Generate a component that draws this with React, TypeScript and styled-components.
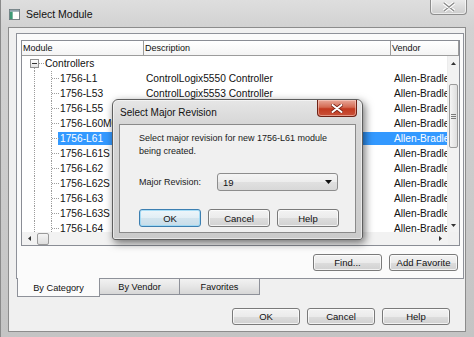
import styled, { createGlobalStyle } from 'styled-components';

const UI_FONT = `"Liberation Sans", Arial, sans-serif`;

const GlobalStyle = createGlobalStyle`
  html, body {
    margin: 0;
    padding: 0;
    background: #c6c6c6;
  }
  body {
    width: 474px;
    height: 337px;
    overflow: hidden;
    font-family: ${UI_FONT};
    color: #000;
  }
`;

interface ModuleRow {
  name: string;
  desc: string;
  selected?: boolean;
}

const modules: ModuleRow[] = [
  { name: '1756-L1', desc: 'ControlLogix5550 Controller' },
  { name: '1756-L53', desc: 'ControlLogix5553 Controller' },
  { name: '1756-L55', desc: 'ControlLogix5555 Controller' },
  { name: '1756-L60M03SE', desc: 'ControlLogix5560M03SE Controller' },
  { name: '1756-L61', desc: 'ControlLogix5561 Controller', selected: true },
  { name: '1756-L61S', desc: 'ControlLogix5561S Safety Controller' },
  { name: '1756-L62', desc: 'ControlLogix5562 Controller' },
  { name: '1756-L62S', desc: 'ControlLogix5562S Safety Controller' },
  { name: '1756-L63', desc: 'ControlLogix5563 Controller' },
  { name: '1756-L63S', desc: 'ControlLogix5563S Safety Controller' },
  { name: '1756-L64', desc: 'ControlLogix5564 Controller' },
];

const dotV = 'repeating-linear-gradient(to bottom, #9c9c9c 0 1px, transparent 1px 2px)';

const App = () => {
  return (
    <>
      <GlobalStyle />
      <Frame>
        <TitleBar>
          <AppIcon viewBox="0 0 12 12">
            <rect x="0.5" y="0.5" width="11" height="11" fill="#fff" stroke="#6d7b80" />
            <rect x="1" y="1" width="10" height="2" fill="#8fa3ad" />
            <rect x="1" y="3" width="3" height="8" fill="#3f9a78" />
          </AppIcon>
          <Title>Select Module</Title>
          <CloseButton>
            <svg width="12" height="10" viewBox="0 0 12 10">
              <path d="M1 1 L11 9 M11 1 L1 9" stroke="#fff" strokeWidth="3.4" strokeLinecap="round" />
              <path d="M1 1 L11 9 M11 1 L1 9" stroke="#8a8a8a" strokeWidth="1.4" strokeLinecap="round" />
            </svg>
          </CloseButton>
        </TitleBar>

        <Client>
          <TabPage>
            <ListView>
              <Header>
                <HeaderCell $width={122}>Module</HeaderCell>
                <HeaderCell $width={247}>Description</HeaderCell>
                <HeaderCell>Vendor</HeaderCell>
              </Header>
              <Middle>
                <Body>
                  <Row>
                    <RootCell>
                      <Expander>
                        <svg width="5" height="1" viewBox="0 0 5 1">
                          <rect width="5" height="1" fill="#333" />
                        </svg>
                      </Expander>
                      <Connector $width={5} />
                      <Label>Controllers</Label>
                    </RootCell>
                    <Cell />
                    <Cell />
                  </Row>
                  {modules.map((m) => (
                    <Row key={m.name} $selected={m.selected}>
                      <ChildCell>
                        <Connector $width={7} />
                        <Label>{m.name}</Label>
                      </ChildCell>
                      <Cell>{m.desc}</Cell>
                      <Cell>Allen-Bradley</Cell>
                    </Row>
                  ))}
                </Body>
                <VScroll>
                  <ArrowBox>
                    <svg width="5" height="3" viewBox="0 0 5 3">
                      <path d="M0 3 L2.5 0 L5 3 Z" fill="#333" />
                    </svg>
                  </ArrowBox>
                  <VTrack>
                    <VThumb>
                      <Grip />
                    </VThumb>
                  </VTrack>
                  <ArrowBox>
                    <svg width="5" height="3" viewBox="0 0 5 3">
                      <path d="M0 0 L5 0 L2.5 3 Z" fill="#333" />
                    </svg>
                  </ArrowBox>
                </VScroll>
              </Middle>
              <HScrollRow>
                <HScroll>
                  <HArrowBox>
                    <svg width="3" height="5" viewBox="0 0 3 5">
                      <path d="M3 0 L3 5 L0 2.5 Z" fill="#333" />
                    </svg>
                  </HArrowBox>
                  <HThumb />
                  <HTrack />
                  <HArrowBox>
                    <svg width="3" height="5" viewBox="0 0 3 5">
                      <path d="M0 0 L0 5 L3 2.5 Z" fill="#333" />
                    </svg>
                  </HArrowBox>
                </HScroll>
                <Corner />
              </HScrollRow>
            </ListView>
            <PageButtons>
              <Button $width={69}>Find...</Button>
              <Button $width={69}>Add Favorite</Button>
            </PageButtons>
          </TabPage>

          <TabStrip>
            <Tab $active $width={83}>By Category</Tab>
            <Tab $width={81}>By Vendor</Tab>
            <Tab $width={81}>Favorites</Tab>
          </TabStrip>

          <Footer>
            <Button $width={68} $height={17}>OK</Button>
            <Button $width={68} $height={17}>Cancel</Button>
            <Button $width={68} $height={17}>Help</Button>
          </Footer>
        </Client>

        <Dialog>
          <DialogTitleBar>
            <DialogTitle>Select Major Revision</DialogTitle>
            <RedClose>
              <svg width="12" height="9" viewBox="0 0 12 9">
                <path d="M1.5 1 L10.5 8 M10.5 1 L1.5 8" stroke="#7a2316" strokeWidth="3.6" strokeLinecap="round" />
                <path d="M1.5 1 L10.5 8 M10.5 1 L1.5 8" stroke="#fff" strokeWidth="2" strokeLinecap="round" />
              </svg>
            </RedClose>
          </DialogTitleBar>
          <DialogClient>
            <Prompt>
              Select major revision for new 1756-L61 module
              <br />
              being created.
            </Prompt>
            <FieldRow>
              <FieldLabel>Major Revision:</FieldLabel>
              <Combo>
                <span>19</span>
                <svg width="7" height="4" viewBox="0 0 7 4">
                  <path d="M0 0 L7 0 L3.5 4 Z" fill="#111" />
                </svg>
              </Combo>
            </FieldRow>
            <DialogButtons>
              <Button $width={62} $height={18} $default>OK</Button>
              <Button $width={62} $height={18}>Cancel</Button>
              <Button $width={62} $height={18}>Help</Button>
            </DialogButtons>
          </DialogClient>
        </Dialog>
      </Frame>
    </>
  );
};

export default App;

const Frame = styled.div`
  position: relative;
  width: 474px;
  height: 337px;
  display: flex;
  flex-direction: column;
  box-sizing: border-box;
  padding: 0 8px 5px 7px;
  background: linear-gradient(180deg, #dedede 0px, #d2d2d2 27px, #c4c4c4 100%);
  border-left: 1px solid #8a8a8a;
  overflow: hidden;
`;

const TitleBar = styled.div`
  height: 27px;
  flex: none;
  display: flex;
  align-items: center;
  position: relative;
  padding-left: 1px;
`;

const AppIcon = styled.svg`
  width: 11px;
  height: 11px;
  margin-top: 2px;
`;

const Title = styled.span`
  margin-left: 6px;
  margin-top: 1px;
  font-size: 10.5px;
  color: #111;
`;

const CloseButton = styled.div`
  position: absolute;
  top: -1px;
  right: -1px;
  width: 37px;
  height: 16px;
  display: flex;
  align-items: center;
  justify-content: center;
  box-sizing: border-box;
  border: 1px solid #8d8d8d;
  border-top: none;
  border-radius: 0 0 4px 4px;
  background: linear-gradient(180deg, #ececec 0%, #dcdcdc 50%, #cdcdcd 100%);
  box-shadow: inset 0 0 0 1px rgba(255, 255, 255, 0.6);
`;

const Client = styled.div`
  flex: 1;
  display: flex;
  flex-direction: column;
  background: #f0f0f0;
  border: 1px solid #8c8c8c;
  padding: 5px 1px 0 7px;
`;

const TabPage = styled.div`
  height: 246px;
  box-sizing: border-box;
  display: flex;
  flex-direction: column;
  background: #fbfbfb;
  border: 1px solid #8e9199;
  padding: 6px 3px 0 4px;
`;

const ListView = styled.div`
  height: 206px;
  box-sizing: border-box;
  display: flex;
  flex-direction: column;
  background: #fff;
  border: 1px solid #8a8d95;
`;

const Header = styled.div`
  height: 15px;
  flex: none;
  display: flex;
  font-size: 9px;
  box-sizing: border-box;
  border-bottom: 1px solid #9c9c9c;
  background: linear-gradient(180deg, #ffffff 0%, #f4f4f4 100%);
`;

const HeaderCell = styled.div<{ $width?: number }>`
  ${(p) => (p.$width ? `width: ${p.$width}px;` : 'flex: 1;')}
  flex-shrink: 0;
  box-sizing: border-box;
  padding-left: 1px;
  line-height: 14px;
  border-right: 1px solid #9c9c9c;
  color: #111;
`;

const Middle = styled.div`
  flex: 1;
  display: flex;
  min-height: 0;
`;

const Body = styled.div`
  flex: 1;
  overflow: hidden;
  font-size: 10.2px;
`;

const Row = styled.div<{ $selected?: boolean }>`
  height: 15px;
  display: grid;
  grid-template-columns: 122px 248px 1fr;
  line-height: 15px;
  white-space: nowrap;
  color: ${(p) => (p.$selected ? '#fff' : '#111')};
  background: ${(p) =>
    p.$selected
      ? 'linear-gradient(90deg, transparent 36px, #3399ff 36px) 0 1px / 100% 13px no-repeat'
      : 'none'};
`;

const Cell = styled.div`
  overflow: hidden;
  padding-left: 2px;
`;

const RootCell = styled.div`
  display: flex;
  align-items: center;
  padding-left: 8px;
  background-image: ${dotV};
  background-size: 1px 50%;
  background-position: 12px 100%;
  background-repeat: no-repeat;
`;

const ChildCell = styled.div`
  display: flex;
  align-items: center;
  padding-left: 30px;
  overflow: hidden;
  background-image: ${dotV}, ${dotV};
  background-size: 1px 100%, 1px 100%;
  background-position: 12px 0, 29px 0;
  background-repeat: no-repeat;
`;

const Expander = styled.span`
  width: 9px;
  height: 9px;
  flex: none;
  box-sizing: border-box;
  display: flex;
  align-items: center;
  justify-content: center;
  border: 1px solid #919191;
  background: linear-gradient(180deg, #ffffff, #e4e4e4);
`;

const Connector = styled.span<{ $width: number }>`
  width: ${(p) => p.$width}px;
  flex: none;
  height: 0;
  border-top: 1px dotted #9c9c9c;
`;

const Label = styled.span`
  padding-left: 1px;
`;

const VScroll = styled.div`
  width: 11px;
  flex: none;
  display: flex;
  flex-direction: column;
  background: #f2f2f2;
  border-left: 1px solid #ececec;
`;

const ArrowBox = styled.div`
  height: 14px;
  display: flex;
  align-items: center;
  justify-content: center;
`;

const VTrack = styled.div`
  flex: 1;
  padding-top: 14px;
`;

const VThumb = styled.div`
  height: 64px;
  margin: 0 1px;
  box-sizing: border-box;
  display: flex;
  align-items: center;
  justify-content: center;
  border: 1px solid #9b9b9b;
  border-radius: 2px;
  background: linear-gradient(90deg, #f5f5f5, #dedede);
`;

const Grip = styled.div`
  width: 5px;
  height: 5px;
  background: repeating-linear-gradient(to bottom, #7a7a7a 0 1px, transparent 1px 2px);
`;

const HScrollRow = styled.div`
  height: 13px;
  flex: none;
  display: flex;
`;

const HScroll = styled.div`
  flex: 1;
  display: flex;
  align-items: center;
  background: #f2f2f2;
`;

const HArrowBox = styled.div`
  width: 15px;
  height: 13px;
  display: flex;
  align-items: center;
  justify-content: center;
`;

const HThumb = styled.div`
  width: 12px;
  height: 12px;
  box-sizing: border-box;
  border: 1px solid #9b9b9b;
  border-radius: 2px;
  background: linear-gradient(180deg, #f5f5f5, #dedede);
`;

const HTrack = styled.div`
  flex: 1;
`;

const Corner = styled.div`
  width: 11px;
  background: #f0f0f0;
`;

const PageButtons = styled.div`
  display: flex;
  justify-content: flex-end;
  gap: 7px;
  margin-top: 8px;
  padding-right: 2px;
`;

const Button = styled.div<{ $width: number; $height?: number; $default?: boolean }>`
  width: ${(p) => p.$width}px;
  height: ${(p) => p.$height ?? 17}px;
  box-sizing: border-box;
  display: flex;
  align-items: center;
  justify-content: center;
  font-size: 9.5px;
  color: #111;
  border: 1px solid ${(p) => (p.$default ? '#3c7fb1' : '#7a7a7a')};
  border-radius: 3px;
  background: ${(p) =>
    p.$default
      ? 'linear-gradient(180deg, #eef6fa 0%, #e1eef5 50%, #d2e4ee 51%, #c8dde9 100%)'
      : 'linear-gradient(180deg, #f3f3f3 0%, #ebebeb 50%, #dddddd 51%, #d1d1d1 100%)'};
  box-shadow: inset 0 0 0 1px ${(p) => (p.$default ? 'rgba(150, 215, 245, 0.8)' : 'rgba(255, 255, 255, 0.7)')};
`;

const TabStrip = styled.div`
  display: flex;
  align-items: flex-start;
  padding-left: 1px;
  height: 18px;
`;

const Tab = styled.div<{ $active?: boolean; $width: number }>`
  width: ${(p) => p.$width}px;
  box-sizing: border-box;
  display: flex;
  align-items: center;
  justify-content: center;
  font-size: 9.2px;
  color: #111;
  border: 1px solid #8e9199;
  border-top: none;
  ${(p) =>
    p.$active
      ? `
    height: 19px;
    margin-top: -1px;
    padding-top: 2px;
    background: #fbfbfb;
    position: relative;
    z-index: 1;
  `
      : `
    height: 16px;
    margin-left: -1px;
    background: linear-gradient(180deg, #f2f2f2 0%, #e6e6e6 50%, #d7d7d7 100%);
  `}
`;

const Footer = styled.div`
  display: flex;
  justify-content: flex-end;
  gap: 7px;
  padding: 11px 14px 0 0;
`;

const Dialog = styled.div`
  position: absolute;
  left: 111px;
  top: 99px;
  width: 251px;
  height: 141px;
  box-sizing: border-box;
  display: flex;
  flex-direction: column;
  padding: 0 6px 6px 6px;
  border: 1px solid #5e5e5e;
  border-radius: 6px 6px 3px 3px;
  background: linear-gradient(180deg, #e6e6e6 0px, #d6d6d6 25px, #cbcbcb 100%);
  box-shadow: 2px 3px 9px rgba(0, 0, 0, 0.55), inset 0 0 0 1px rgba(255, 255, 255, 0.55);
`;

const DialogTitleBar = styled.div`
  height: 24px;
  flex: none;
  display: flex;
  align-items: center;
  position: relative;
  padding-left: 1px;
`;

const DialogTitle = styled.span`
  font-size: 10px;
  color: #111;
  margin-top: 1px;
`;

const RedClose = styled.div`
  position: absolute;
  top: 0;
  right: -1px;
  width: 40px;
  height: 17px;
  box-sizing: border-box;
  display: flex;
  align-items: center;
  justify-content: center;
  border: 1px solid #6e2216;
  border-top: none;
  border-radius: 0 0 4px 4px;
  background: linear-gradient(180deg, #e9a99a 0%, #d46a52 45%, #c2391f 55%, #c9523a 100%);
  box-shadow: inset 0 0 0 1px rgba(255, 220, 210, 0.5);
`;

const DialogClient = styled.div`
  flex: 1;
  background: #f0f0f0;
  border: 1px solid #8a8a8a;
  padding: 7px 0 0 19px;
  display: flex;
  flex-direction: column;
`;

const Prompt = styled.div`
  font-size: 9px;
  line-height: 13px;
  color: #1a1a1a;
  white-space: nowrap;
`;

const FieldRow = styled.div`
  display: flex;
  align-items: center;
  margin-top: 15px;
`;

const FieldLabel = styled.span`
  width: 78px;
  font-size: 9px;
  color: #1a1a1a;
`;

const Combo = styled.div`
  width: 121px;
  height: 18px;
  box-sizing: border-box;
  display: flex;
  align-items: center;
  justify-content: space-between;
  padding: 0 5px 0 5px;
  font-size: 9.5px;
  color: #111;
  border: 1px solid #8d8d8d;
  border-radius: 3px;
  background: linear-gradient(180deg, #f5f5f5 0%, #ececec 50%, #e0e0e0 51%, #d8d8d8 100%);
`;

const DialogButtons = styled.div`
  display: flex;
  gap: 7px;
  margin-top: 18px;
`;
